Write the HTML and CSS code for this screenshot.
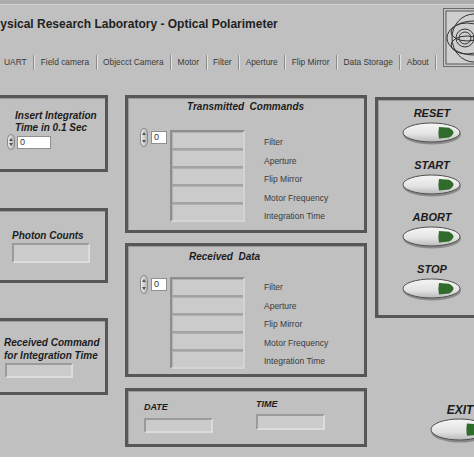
FILE: index.html
```html
<!DOCTYPE html>
<html lang="en">
<head>
  <meta charset="UTF-8">
  <title>Optical Polarimeter</title>
  <link rel="stylesheet" href="styles.css">
</head>
<body>
  <div class="window">
    <div class="topstrip"></div>
    <header class="header">
      <div class="header__left">
        <h1 class="title">Physical Research Laboratory - Optical Polarimeter</h1>
        <ul class="tabs">
          <li>UART</li>
          <li>Field camera</li>
          <li>Objecct Camera</li>
          <li>Motor</li>
          <li>Filter</li>
          <li>Aperture</li>
          <li>Flip Mirror</li>
          <li>Data Storage</li>
          <li>About</li>
        </ul>
      </div>
      <div class="logo">
        <svg width="40" height="59" viewBox="0 0 40 59">
          <rect x="0.5" y="0.5" width="39" height="58" fill="#c6c6c6" stroke="#6a6a6a"/>
          <rect x="3" y="3" width="34" height="53" fill="#cfcfcf" stroke="#555"/>
          <g fill="none" stroke="#333" stroke-width="1">
            <ellipse cx="31" cy="30" rx="27" ry="17"/>
            <ellipse cx="31" cy="30" rx="22" ry="24"/>
            <ellipse cx="24" cy="24" rx="16" ry="9"/>
            <ellipse cx="24" cy="37" rx="16" ry="9"/>
            <circle cx="22" cy="30" r="9"/>
            <circle cx="22" cy="30" r="6"/>
          </g>
        </svg>
      </div>
    </header>

    <main class="panels">
      <section class="col col--left">
        <div class="panel panel--integration">
          <p class="label">Insert Integration<br>Time in 0.1 Sec</p>
          <div class="spin-row">
            <span class="spinner"></span>
            <span class="num-input num-input--wide">0</span>
          </div>
        </div>
        <div class="panel panel--photon">
          <p class="label">Photon Counts</p>
          <div class="field field--photon"></div>
        </div>
        <div class="panel panel--recvcmd">
          <p class="label">Received Command<br>for Integration Time</p>
          <div class="field field--recvcmd"></div>
        </div>
      </section>

      <section class="col col--mid">
        <div class="panel panel--tx">
          <p class="label panel__title">Transmitted &nbsp;Commands</p>
          <div class="array-row">
            <span class="spinner spinner--tall"></span>
            <span class="num-input">0</span>
            <div class="array">
              <span></span><span></span><span></span><span></span><span></span>
            </div>
            <ul class="names">
              <li>Filter</li>
              <li>Aperture</li>
              <li>Flip Mirror</li>
              <li>Motor Frequency</li>
              <li>Integration Time</li>
            </ul>
          </div>
        </div>
        <div class="panel panel--rx">
          <p class="label panel__title">Received &nbsp;Data</p>
          <div class="array-row">
            <span class="spinner spinner--tall"></span>
            <span class="num-input">0</span>
            <div class="array">
              <span></span><span></span><span></span><span></span><span></span>
            </div>
            <ul class="names">
              <li>Filter</li>
              <li>Aperture</li>
              <li>Flip Mirror</li>
              <li>Motor Frequency</li>
              <li>Integration Time</li>
            </ul>
          </div>
        </div>
        <div class="panel panel--datetime">
          <div class="dt dt--date">
            <p class="label">DATE</p>
            <div class="field field--date"></div>
          </div>
          <div class="dt dt--time">
            <p class="label">TIME</p>
            <div class="field field--time"></div>
          </div>
        </div>
      </section>

      <section class="col col--right">
        <div class="panel panel--buttons">
          <div class="btn">
            <p class="label">RESET</p>
            <svg class="oval" width="60" height="23" viewBox="0 0 60 23"><ellipse cx="30" cy="12.5" rx="29" ry="10" fill="#8a8a8a"/><defs><linearGradient id="g1" x1="0" y1="0" x2="0" y2="1"><stop offset="0" stop-color="#f6f6f6"/><stop offset="0.6" stop-color="#e2e2e2"/><stop offset="1" stop-color="#b9b9b9"/></linearGradient></defs><ellipse cx="29.5" cy="10.5" rx="28.5" ry="9.5" fill="url(#g1)" stroke="#4e4e4e"/><path d="M37 5 L47 5.8 Q56 10.5 47 15.6 L37 16.4 Q35.8 10.5 37 5 Z" fill="#2f6b2b"/></svg>
          </div>
          <div class="btn">
            <p class="label">START</p>
            <svg class="oval" width="60" height="23" viewBox="0 0 60 23"><ellipse cx="30" cy="12.5" rx="29" ry="10" fill="#8a8a8a"/><ellipse cx="29.5" cy="10.5" rx="28.5" ry="9.5" fill="url(#g1)" stroke="#4e4e4e"/><path d="M37 5 L47 5.8 Q56 10.5 47 15.6 L37 16.4 Q35.8 10.5 37 5 Z" fill="#2f6b2b"/></svg>
          </div>
          <div class="btn">
            <p class="label">ABORT</p>
            <svg class="oval" width="60" height="23" viewBox="0 0 60 23"><ellipse cx="30" cy="12.5" rx="29" ry="10" fill="#8a8a8a"/><ellipse cx="29.5" cy="10.5" rx="28.5" ry="9.5" fill="url(#g1)" stroke="#4e4e4e"/><path d="M37 5 L47 5.8 Q56 10.5 47 15.6 L37 16.4 Q35.8 10.5 37 5 Z" fill="#2f6b2b"/></svg>
          </div>
          <div class="btn">
            <p class="label">STOP</p>
            <svg class="oval" width="60" height="23" viewBox="0 0 60 23"><ellipse cx="30" cy="12.5" rx="29" ry="10" fill="#8a8a8a"/><ellipse cx="29.5" cy="10.5" rx="28.5" ry="9.5" fill="url(#g1)" stroke="#4e4e4e"/><path d="M37 5 L47 5.8 Q56 10.5 47 15.6 L37 16.4 Q35.8 10.5 37 5 Z" fill="#2f6b2b"/></svg>
          </div>
        </div>
        <div class="btn btn--exit">
          <p class="label">EXIT</p>
          <svg class="oval" width="60" height="25" viewBox="0 0 60 25"><ellipse cx="30" cy="13.5" rx="29" ry="11" fill="#8a8a8a"/><ellipse cx="29.5" cy="11.5" rx="28.5" ry="10.5" fill="url(#g1)" stroke="#4e4e4e"/><path d="M37 5.5 L47 6.3 Q56 11.5 47 17 L37 17.8 Q35.8 11.5 37 5.5 Z" fill="#2f6b2b"/></svg>
        </div>
      </section>
    </main>
  </div>
</body>
</html>
```

FILE: styles.css
```css
:root {
  --bg: #c0c0c0;
  --frame: #575757;
  --ink: #1c1c1c;
  --text: #3a3a3a;
  --well: #cbcbcb;
}
body {
  margin: 0;
  background: #fff;
  font-family: "Liberation Sans", Arial, sans-serif;
}
p, ul {
  margin: 0;
  padding: 0;
}
ul {
  list-style: none;
}
.window {
  width: 474px;
  height: 457px;
  background: var(--bg);
  overflow: hidden;
}
.topstrip {
  height: 4px;
  background: #acacac;
  border-bottom: 1px solid #d2d2d2;
}

/* header: title, tabs, logo */
.header {
  display: flex;
  height: 67px;
}
.header__left {
  flex: 1;
  padding-top: 12px;
}
.title {
  margin: 0 0 0 -15px;
  font-size: 12px;
  line-height: 14px;
  font-weight: 700;
  color: #222;
  white-space: nowrap;
}
.tabs {
  display: flex;
  margin-top: 24px;
  height: 15px;
}
.tabs li {
  padding: 0 6.5px;
  font-size: 8.4px;
  line-height: 15px;
  color: var(--text);
  border-right: 1px solid #8c8c8c;
  box-shadow: 1px 0 0 #e2e2e2;
  white-space: nowrap;
}
.tabs li:first-child {
  padding-left: 4px;
}
.logo {
  width: 31px;
  margin-top: 3px;
  overflow: hidden;
}
.logo svg {
  display: block;
}

/* panel grid */
.panels {
  display: flex;
  align-items: flex-start;
  margin-left: -5px;
  padding-top: 23px;
}
.col {
  display: flex;
  flex-direction: column;
  flex-shrink: 0;
}
.col--left {
  width: 113px;
}
.col--mid {
  width: 242px;
  margin-left: 17px;
}
.col--right {
  width: 110px;
  margin-left: 8px;
  padding-top: 2px;
}
.panel {
  box-sizing: border-box;
  border: 3px solid var(--frame);
  box-shadow: inset 1px 1px 0 #9a9a9a;
}
.label {
  font-size: 10px;
  line-height: 12px;
  font-weight: 700;
  font-style: italic;
  color: var(--ink);
  white-space: nowrap;
}

/* inputs */
.spinner {
  position: relative;
  display: block;
  box-sizing: border-box;
  width: 8px;
  height: 16px;
  border: 1px solid #8a8a8a;
  border-radius: 4px / 6px;
  background: linear-gradient(to right, #ececec, #b6b6b6);
}
.spinner::before, .spinner::after {
  content: "";
  position: absolute;
  left: 1px;
  border-left: 2px solid transparent;
  border-right: 2px solid transparent;
}
.spinner::before {
  top: 3px;
  border-bottom: 3px solid #555;
}
.spinner::after {
  bottom: 3px;
  border-top: 3px solid #555;
}
.spinner--tall {
  height: 19px;
}
.num-input {
  display: block;
  box-sizing: border-box;
  width: 16px;
  height: 13px;
  margin-left: 3px;
  padding-left: 2px;
  background: #fff;
  border: 1px solid #8f8f8f;
  font-size: 9px;
  line-height: 11px;
  color: #333;
}
.num-input--wide {
  width: 34px;
  margin-left: 2px;
}
.field {
  box-sizing: border-box;
  background: var(--well);
  border: 2px solid;
  border-color: #9b9b9b #dcdcdc #dcdcdc #9b9b9b;
}

/* left column */
.panel--integration {
  height: 77px;
  padding-top: 12px;
}
.panel--integration .label {
  padding-left: 17px;
}
.spin-row {
  display: flex;
  align-items: center;
  margin-left: 9px;
}
.panel--photon {
  height: 75px;
  margin-top: 36px;
  padding-top: 19px;
}
.panel--photon .label {
  padding-left: 14px;
}
.field--photon {
  width: 78px;
  height: 20px;
  margin: 1px 0 0 14px;
}
.panel--recvcmd {
  height: 77px;
  margin-top: 35px;
  padding-top: 15px;
}
.panel--recvcmd .label {
  padding-left: 6px;
  line-height: 13px;
}
.field--recvcmd {
  width: 68px;
  height: 15px;
  margin: 1px 0 0 7px;
}

/* middle column */
.panel--tx {
  height: 138px;
  padding-top: 3px;
}
.panel--tx .panel__title {
  padding-left: 59px;
}
.panel--tx .array-row {
  margin-top: 17px;
}
.panel--rx {
  height: 134px;
  margin-top: 10px;
  padding-top: 5px;
}
.panel--rx .panel__title {
  padding-left: 61px;
}
.panel--rx .array-row {
  margin-top: 14px;
}
.array-row {
  display: flex;
  align-items: flex-start;
  padding-left: 12px;
}
.array-row .spinner {
  margin-top: -2px;
}
.array-row .num-input {
  margin-top: 1px;
}
.array {
  box-sizing: border-box;
  display: flex;
  flex-direction: column;
  gap: 2px;
  width: 75px;
  height: 92px;
  margin-left: 3px;
  background: #a3a3a3;
  border: 2px solid;
  border-color: #8e8e8e #d4d4d4 #d4d4d4 #8e8e8e;
}
.array span {
  flex: 1;
  background: var(--well);
  border-top: 1px solid #b0b0b0;
  border-left: 1px solid #b0b0b0;
}
.names {
  margin-left: 19px;
  padding-top: 3px;
}
.panel--rx .names {
  padding-top: 1px;
}
.names li {
  font-size: 8.5px;
  line-height: 18.5px;
  color: var(--text);
  white-space: nowrap;
}
.panel--datetime {
  display: flex;
  align-items: flex-start;
  height: 59px;
  margin-top: 11px;
  padding-left: 16px;
}
.dt .label {
  font-size: 9px;
  line-height: 10px;
}
.dt--date {
  margin-top: 11px;
}
.field--date {
  width: 69px;
  height: 15px;
  margin-top: 6px;
}
.dt--time {
  margin: 8px 0 0 43px;
}
.field--time {
  width: 69px;
  height: 16px;
  margin-top: 5px;
}

/* right column */
.panel--buttons {
  height: 221px;
  padding-top: 7px;
}
.btn {
  width: 60px;
  margin: 0 0 14px 24px;
  text-align: center;
}
.btn .label {
  font-size: 11px;
  margin-bottom: 3px;
}
.oval {
  display: block;
}
.btn--exit {
  margin: 86px 0 0 55px;
}
.btn--exit .label {
  font-size: 12px;
  margin-bottom: 2px;
}
```
